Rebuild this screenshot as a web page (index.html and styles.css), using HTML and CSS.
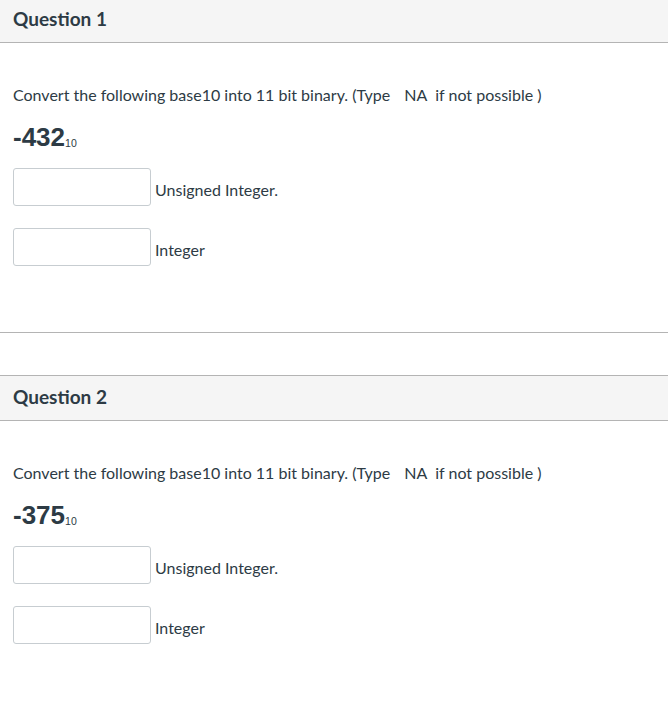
FILE: index.html
```html
<!DOCTYPE html>
<html lang="en">
<head>
<meta charset="utf-8">
<title>Quiz</title>
<link rel="stylesheet" href="styles.css">
</head>
<body>
<div class="quiz">
  <section class="question">
    <div class="q-header">Question 1</div>
    <div class="q-body">
      <p class="prompt">Convert the following base10 into 11 bit binary. (Type<span class="na">NA</span>if not possible )</p>
      <div class="number">-432<sub>10</sub></div>
      <div class="answers">
        <label class="answer"><input class="box" type="text"><span>Unsigned Integer.</span></label>
        <label class="answer"><input class="box" type="text"><span>Integer</span></label>
      </div>
    </div>
  </section>
  <section class="question">
    <div class="q-header">Question 2</div>
    <div class="q-body">
      <p class="prompt">Convert the following base10 into 11 bit binary. (Type<span class="na">NA</span>if not possible )</p>
      <div class="number">-375<sub>10</sub></div>
      <div class="answers">
        <label class="answer"><input class="box" type="text"><span>Unsigned Integer.</span></label>
        <label class="answer"><input class="box" type="text"><span>Integer</span></label>
      </div>
    </div>
  </section>
</div>
</body>
</html>
```

FILE: styles.css
```css
html, body {
  margin: 0;
  padding: 0;
  background: #ffffff;
}
body {
  font-family: Lato, "Noto Sans", sans-serif;
  color: #2d3b45;
  font-size: 16px;
}
.quiz {
  margin-top: -3px;
}
.question {
  border-top: 1px solid #b4b4b4;
  border-bottom: 1px solid #b4b4b4;
  margin-bottom: 42px;
}
.q-header {
  box-sizing: border-box;
  height: 45px;
  background: #f5f5f5;
  border-bottom: 1px solid #b4b4b4;
  display: flex;
  align-items: center;
  padding: 0 13px 4px;
  font-weight: 700;
  font-size: 19px;
}
.q-body {
  padding: 40px 13px 66px;
}
.prompt {
  margin: 0;
  line-height: 24px;
  font-size: 16px;
}
.na {
  margin: 0 8px 0 14px;
}
.number {
  margin-top: 15px;
  font-family: "Liberation Sans", Arial, sans-serif;
  font-weight: 700;
  font-size: 26px;
  line-height: 30px;
  height: 30px;
}
.number sub {
  font-size: 10.5px;
  line-height: 0;
  font-weight: 400;
  vertical-align: baseline;
  position: relative;
  top: 1px;
}
.answers {
  margin-top: 16px;
  display: flex;
  flex-direction: column;
  gap: 22px;
}
.answer {
  display: flex;
  align-items: center;
  gap: 4px;
  font-size: 16px;
}
.answer span {
  padding-top: 4px;
}
.box {
  box-sizing: border-box;
  width: 138px;
  height: 38px;
  margin: 0;
  border: 1px solid #c7cdd1;
  border-radius: 3px;
  background: #fff;
  padding: 0 8px;
}
```
